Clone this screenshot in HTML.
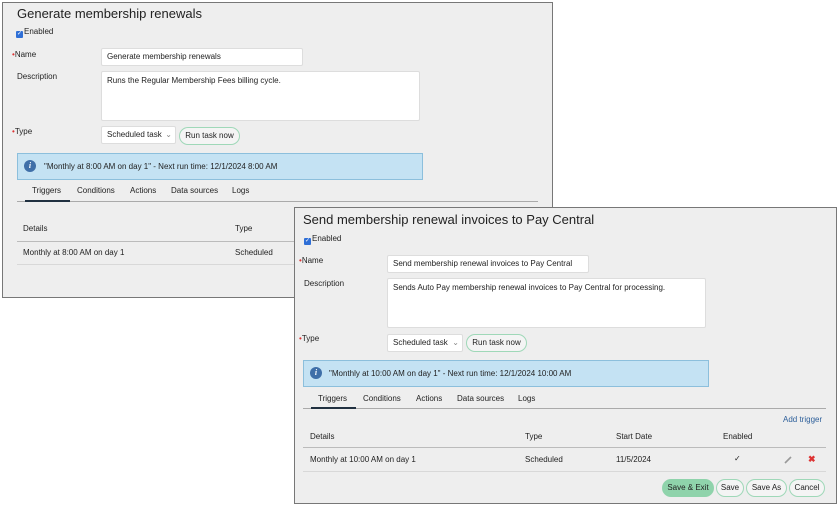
<!DOCTYPE html>
<html><head><style>
*{margin:0;padding:0;box-sizing:border-box}
body{width:839px;height:507px;background:#fff;position:relative;overflow:hidden;font-family:"Liberation Sans",sans-serif;font-size:8px;color:#222}
.w{position:absolute;background:#eeeeee;border:1px solid #777}
.a{position:absolute;white-space:nowrap}
.t{font-size:13px;color:#222}
.inp{position:absolute;background:#fff;border:1px solid #ddd;border-radius:2px;padding:0 0 0 5px}
.btn{position:absolute;border:1px solid #9fd8b8;border-radius:9px;background:#f4f4f4;text-align:center;line-height:16px;font-size:8px}
.info{position:absolute;background:#c4e2f3;border:1px solid #8cbfdc}
.ic{position:absolute;width:12px;height:12px;border-radius:50%;background:#3f6fa8;color:#fff;font:italic bold 8px "Liberation Serif",serif;text-align:center;line-height:12px}
.req{color:#d33}
.cb{display:inline-block;width:7px;height:7px;background:#2f6fd6;border-radius:1px;vertical-align:-1px;margin-right:1px;color:#fff;font-size:6px;line-height:7px;text-align:center}
.line{position:absolute;height:1px;background:#d8d8d8}
.tabu{position:absolute;height:2px;background:#203040}
</style></head><body>

<div class="w" style="left:2px;top:2px;width:551px;height:296px">
<div class="a t" style="left:14px;top:3px">Generate membership renewals</div>
<div class="a" style="left:13px;top:24px"><span class="cb">✓</span>Enabled</div>
<div class="a" style="left:9px;top:47px"><span class="req">•</span>Name</div>
<div class="inp" style="left:98px;top:45px;width:202px;height:18px;line-height:16px">Generate membership renewals</div>
<div class="a" style="left:14px;top:69px">Description</div>
<div class="inp" style="left:98px;top:68px;width:319px;height:50px;padding-top:4px">Runs the Regular Membership Fees billing cycle.</div>
<div class="a" style="left:9px;top:124px"><span class="req">•</span>Type</div>
<div class="inp" style="left:98px;top:123px;width:75px;height:18px;line-height:16px">Scheduled task <span style="float:right;margin-right:3px;color:#888">⌄</span></div>
<div class="btn" style="left:176px;top:124px;width:61px;height:18px">Run task now</div>
<div class="info" style="left:14px;top:150px;width:406px;height:27px"><div class="ic" style="left:6px;top:6px">i</div><div class="a" style="left:26px;top:8px">"Monthly at 8:00 AM on day 1" - Next run time: 12/1/2024 8:00 AM</div></div>
<div class="a" style="left:29px;top:183px">Triggers</div>
<div class="a" style="left:74px;top:183px">Conditions</div>
<div class="a" style="left:127px;top:183px">Actions</div>
<div class="a" style="left:168px;top:183px">Data sources</div>
<div class="a" style="left:229px;top:183px">Logs</div>
<div class="line" style="left:14px;top:198px;width:521px;background:#aaa"></div>
<div class="tabu" style="left:22px;top:197px;width:45px"></div>
<div class="a" style="left:20px;top:221px">Details</div>
<div class="a" style="left:232px;top:221px">Type</div>
<div class="line" style="left:14px;top:238px;width:290px;background:#bbb"></div>
<div class="a" style="left:20px;top:245px">Monthly at 8:00 AM on day 1</div>
<div class="a" style="left:232px;top:245px">Scheduled</div>
<div class="line" style="left:14px;top:261px;width:290px"></div>
</div>

<div class="w" style="left:294px;top:207px;width:543px;height:297px">
<div class="a t" style="left:8px;top:4px">Send membership renewal invoices to Pay Central</div>
<div class="a" style="left:9px;top:26px"><span class="cb">✓</span>Enabled</div>
<div class="a" style="left:4px;top:48px"><span class="req">•</span>Name</div>
<div class="inp" style="left:92px;top:47px;width:202px;height:18px;line-height:16px">Send membership renewal invoices to Pay Central</div>
<div class="a" style="left:9px;top:71px">Description</div>
<div class="inp" style="left:92px;top:70px;width:319px;height:50px;padding-top:4px">Sends Auto Pay membership renewal invoices to Pay Central for processing.</div>
<div class="a" style="left:4px;top:126px"><span class="req">•</span>Type</div>
<div class="inp" style="left:92px;top:126px;width:76px;height:18px;line-height:16px">Scheduled task <span style="float:right;margin-right:3px;color:#888">⌄</span></div>
<div class="btn" style="left:171px;top:126px;width:61px;height:18px">Run task now</div>
<div class="info" style="left:8px;top:152px;width:406px;height:27px"><div class="ic" style="left:6px;top:6px">i</div><div class="a" style="left:25px;top:8px">"Monthly at 10:00 AM on day 1" - Next run time: 12/1/2024 10:00 AM</div></div>
<div class="a" style="left:23px;top:186px">Triggers</div>
<div class="a" style="left:68px;top:186px">Conditions</div>
<div class="a" style="left:121px;top:186px">Actions</div>
<div class="a" style="left:162px;top:186px">Data sources</div>
<div class="a" style="left:223px;top:186px">Logs</div>
<div class="line" style="left:8px;top:200px;width:523px;background:#aaa"></div>
<div class="tabu" style="left:16px;top:199px;width:45px"></div>
<div class="a" style="left:488px;top:207px;color:#2d5f9a">Add trigger</div>
<div class="a" style="left:15px;top:224px">Details</div>
<div class="a" style="left:230px;top:224px">Type</div>
<div class="a" style="left:321px;top:224px">Start Date</div>
<div class="a" style="left:428px;top:224px">Enabled</div>
<div class="line" style="left:8px;top:239px;width:523px;background:#bbb"></div>
<div class="a" style="left:15px;top:247px">Monthly at 10:00 AM on day 1</div>
<div class="a" style="left:230px;top:247px">Scheduled</div>
<div class="a" style="left:321px;top:247px">11/5/2024</div>
<div class="a" style="left:439px;top:246px">✓</div>
<svg class="a" style="left:489px;top:248px" width="8" height="8" viewBox="0 0 8 8"><path d="M1 7 L7 1" stroke="#999" stroke-width="1.6"/></svg>
<div class="a" style="left:513px;top:246px;color:#d33;font-weight:bold;font-size:9px">✖</div>
<div class="line" style="left:8px;top:263px;width:523px"></div>
<div class="btn" style="left:367px;top:271px;width:52px;height:18px;background:#8fd3ab;border-color:#8fd3ab">Save &amp; Exit</div>
<div class="btn" style="left:421px;top:271px;width:28px;height:18px">Save</div>
<div class="btn" style="left:451px;top:271px;width:41px;height:18px">Save As</div>
<div class="btn" style="left:494px;top:271px;width:36px;height:18px">Cancel</div>
</div>
</body></html>
